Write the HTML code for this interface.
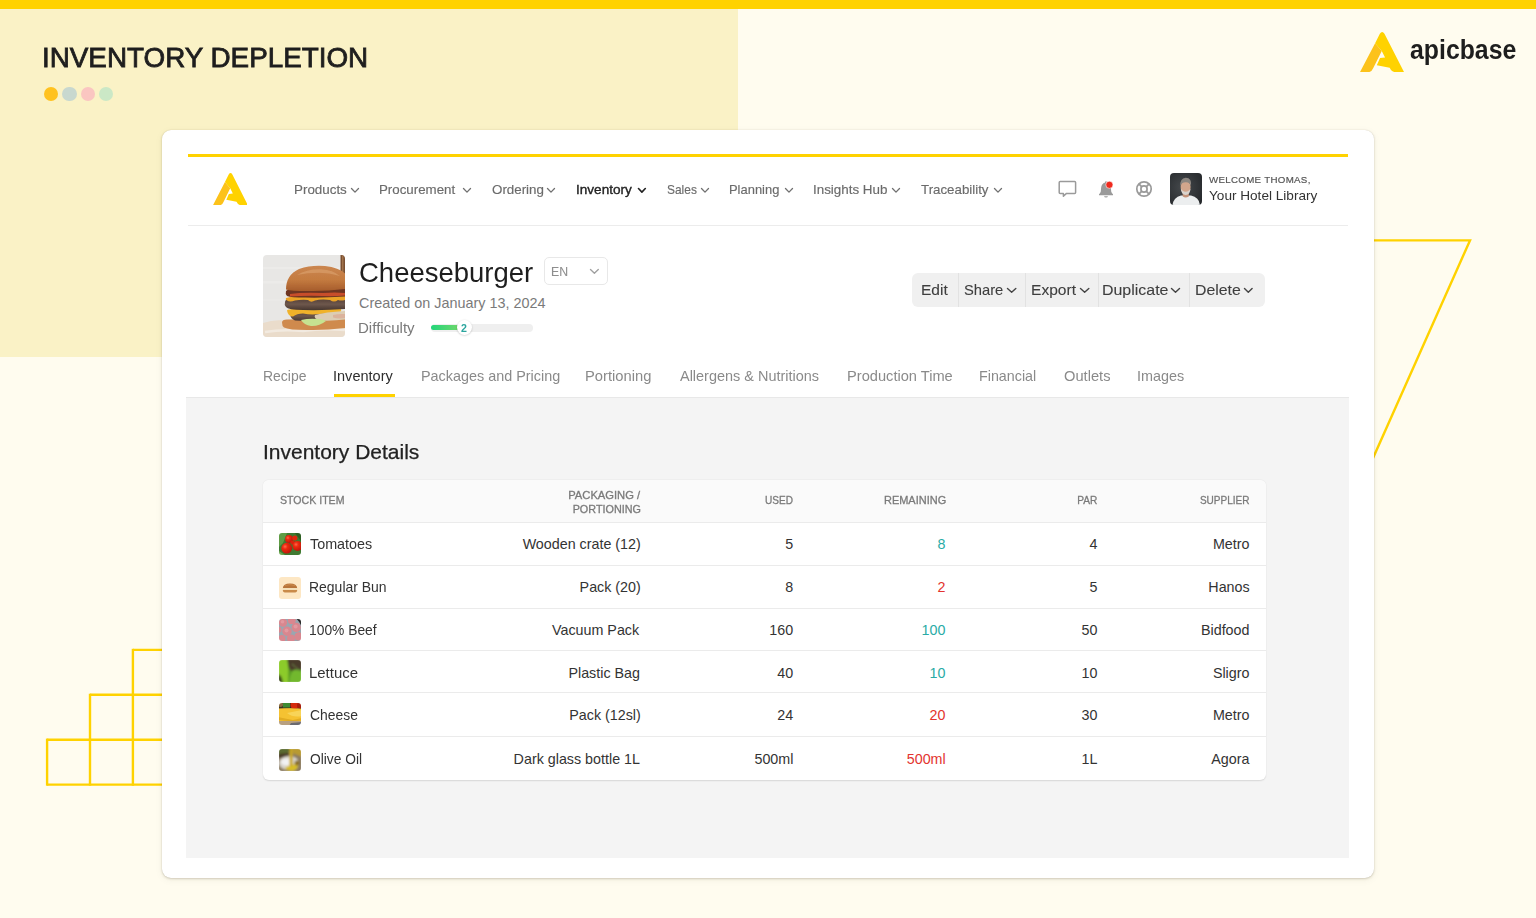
<!DOCTYPE html>
<html><head><meta charset="utf-8"><title>Inventory Depletion</title>
<style>
html,body{margin:0;padding:0}
body{width:1536px;height:918px;position:relative;overflow:hidden;background:#FFFCEF;font-family:"Liberation Sans",sans-serif}
.a{position:absolute}
.t{position:absolute;line-height:1;white-space:nowrap}
</style></head><body>
<div class="a" style="left:0;top:0;width:1536px;height:9px;background:#FFD200"></div>
<div class="a" style="left:0;top:9px;width:738px;height:348px;background:#FAF2C6"></div>
<div class="t" style="top:44px;font-size:27.8px;color:#1E1E1E;-webkit-text-stroke:0.8px #1E1E1E;left:42.10px;transform:scaleX(1.0007);transform-origin:0 50%;">INVENTORY DEPLETION</div>
<div class="a" style="left:44.00px;top:87px;width:14.4px;height:14.4px;border-radius:50%;background:#FFC21F"></div>
<div class="a" style="left:62.35px;top:87px;width:14.4px;height:14.4px;border-radius:50%;background:#C8D8CF"></div>
<div class="a" style="left:80.70px;top:87px;width:14.4px;height:14.4px;border-radius:50%;background:#FAC6C1"></div>
<div class="a" style="left:99.05px;top:87px;width:14.4px;height:14.4px;border-radius:50%;background:#CBE8C6"></div>
<svg class="a" style="left:1359.6px;top:31.8px" width="44.1" height="40.1" viewBox="5.7 5.75 43.8 39.85" preserveAspectRatio="none"><path fill="#FFD200" d="M25.4,7.6 Q27.7,4.1 30.0,7.6 L49.5,45.6 L40.8,45.6 Q37.3,45.6 35.2,41.2 L22.4,38.8 L25.6,31.6 L30.6,31.0 L27.3,24.6 L20.7,17 Z"/><path fill="#FCC21B" d="M20.7,17 L27.3,24.6 L18.9,41.6 Q17.2,45.6 14.2,45.6 L5.7,45.6 Z"/></svg>
<div class="t" style="top:38px;font-size:25px;color:#1E1E1E;font-weight:bold;left:1410.00px;transform:scaleX(0.9934) scaleY(1.12);transform-origin:0 21px;">apicbase</div>
<svg class="a" style="left:0;top:600px" width="200" height="220"><g stroke="#FFD200" stroke-width="2.4" fill="none"><line x1="132.9" y1="49.9" x2="200" y2="49.9"/><line x1="90" y1="94.8" x2="200" y2="94.8"/><line x1="47.1" y1="139.7" x2="200" y2="139.7"/><line x1="47.1" y1="184.6" x2="200" y2="184.6"/><line x1="132.9" y1="48.8" x2="132.9" y2="185.7"/><line x1="90" y1="93.7" x2="90" y2="185.7"/><line x1="47.1" y1="138.6" x2="47.1" y2="185.7"/></g></svg>
<svg class="a" style="left:1300px;top:200px" width="236" height="300"><path d="M40 40.4 L170 40.4 L59.6 288.3" fill="none" stroke="#FFD200" stroke-width="2.4" stroke-linejoin="miter"/></svg>
<div class="a" style="left:162px;top:130px;width:1212px;height:748px;background:#fff;border-radius:9px;box-shadow:0 1px 2.5px rgba(60,50,20,0.2),0 0 1px rgba(60,50,20,0.18),0 2px 8px rgba(60,50,20,0.05)"></div>
<div class="a" style="left:188px;top:154px;width:1160px;height:3px;background:#FFD200"></div>
<svg class="a" style="left:212.5px;top:173px" width="34.9" height="32.2" viewBox="5.7 5.75 43.8 39.85" preserveAspectRatio="none"><path fill="#FFD200" d="M25.4,7.6 Q27.7,4.1 30.0,7.6 L49.5,45.6 L40.8,45.6 Q37.3,45.6 35.2,41.2 L22.4,38.8 L25.6,31.6 L30.6,31.0 L27.3,24.6 L20.7,17 Z"/><path fill="#FCC21B" d="M20.7,17 L27.3,24.6 L18.9,41.6 Q17.2,45.6 14.2,45.6 L5.7,45.6 Z"/></svg>
<div class="t" style="top:183px;font-size:13px;color:#6B6B6B;-webkit-text-stroke:0.15px #6B6B6B;left:293.67px;transform:scaleX(1.0295);transform-origin:0 50%;">Products</div>
<svg class="a" style="left:350px;top:186.5px" width="10" height="6.6" viewBox="-1 -1 10 6.6"><path d="M0.5 0.5 L4.0 4.1 L7.5 0.5" fill="none" stroke="#707070" stroke-width="1.3" stroke-linecap="round" stroke-linejoin="round"/></svg>
<div class="t" style="top:183px;font-size:13px;color:#6B6B6B;-webkit-text-stroke:0.15px #6B6B6B;left:379.48px;transform:scaleX(1.0229);transform-origin:0 50%;">Procurement</div>
<svg class="a" style="left:462px;top:186.5px" width="10" height="6.6" viewBox="-1 -1 10 6.6"><path d="M0.5 0.5 L4.0 4.1 L7.5 0.5" fill="none" stroke="#707070" stroke-width="1.3" stroke-linecap="round" stroke-linejoin="round"/></svg>
<div class="t" style="top:183px;font-size:13px;color:#6B6B6B;-webkit-text-stroke:0.15px #6B6B6B;left:491.50px;transform:scaleX(1.0269);transform-origin:0 50%;">Ordering</div>
<svg class="a" style="left:546.4px;top:186.5px" width="10" height="6.6" viewBox="-1 -1 10 6.6"><path d="M0.5 0.5 L4.0 4.1 L7.5 0.5" fill="none" stroke="#707070" stroke-width="1.3" stroke-linecap="round" stroke-linejoin="round"/></svg>
<div class="t" style="top:183px;font-size:13px;color:#6B6B6B;-webkit-text-stroke:0.15px #6B6B6B;left:666.50px;transform:scaleX(0.9177);transform-origin:0 50%;">Sales</div>
<svg class="a" style="left:700.4px;top:186.5px" width="10" height="6.6" viewBox="-1 -1 10 6.6"><path d="M0.5 0.5 L4.0 4.1 L7.5 0.5" fill="none" stroke="#707070" stroke-width="1.3" stroke-linecap="round" stroke-linejoin="round"/></svg>
<div class="t" style="top:183px;font-size:13px;color:#6B6B6B;-webkit-text-stroke:0.15px #6B6B6B;left:729.31px;transform:scaleX(0.9946);transform-origin:0 50%;">Planning</div>
<svg class="a" style="left:783.7px;top:186.5px" width="10" height="6.6" viewBox="-1 -1 10 6.6"><path d="M0.5 0.5 L4.0 4.1 L7.5 0.5" fill="none" stroke="#707070" stroke-width="1.3" stroke-linecap="round" stroke-linejoin="round"/></svg>
<div class="t" style="top:183px;font-size:13px;color:#6B6B6B;-webkit-text-stroke:0.15px #6B6B6B;left:812.57px;transform:scaleX(1.0291);transform-origin:0 50%;">Insights Hub</div>
<svg class="a" style="left:890.6px;top:186.5px" width="10" height="6.6" viewBox="-1 -1 10 6.6"><path d="M0.5 0.5 L4.0 4.1 L7.5 0.5" fill="none" stroke="#707070" stroke-width="1.3" stroke-linecap="round" stroke-linejoin="round"/></svg>
<div class="t" style="top:183px;font-size:13px;color:#6B6B6B;-webkit-text-stroke:0.15px #6B6B6B;left:921.00px;transform:scaleX(1.0228);transform-origin:0 50%;">Traceability</div>
<svg class="a" style="left:993px;top:186.5px" width="10" height="6.6" viewBox="-1 -1 10 6.6"><path d="M0.5 0.5 L4.0 4.1 L7.5 0.5" fill="none" stroke="#707070" stroke-width="1.3" stroke-linecap="round" stroke-linejoin="round"/></svg>
<div class="t" style="top:183px;font-size:13px;color:#222;-webkit-text-stroke:0.35px #222;left:575.96px;transform:scaleX(1.0439);transform-origin:0 50%;">Inventory</div>
<svg class="a" style="left:636.8px;top:186.5px" width="9.8" height="6.6" viewBox="-1 -1 9.8 6.6"><path d="M0.5 0.5 L3.9 4.1 L7.3 0.5" fill="none" stroke="#222" stroke-width="1.6" stroke-linecap="round" stroke-linejoin="round"/></svg>
<svg class="a" style="left:1056px;top:178px" width="24" height="22" viewBox="0 0 24 22"><path d="M4.2 3.6 H18.6 Q19.6 3.6 19.6 4.6 V14.4 Q19.6 15.4 18.6 15.4 H10.5 L7.4 18.2 V15.4 H4.2 Q3.2 15.4 3.2 14.4 V4.6 Q3.2 3.6 4.2 3.6 Z" fill="none" stroke="#9A9A9A" stroke-width="1.5" stroke-linejoin="round"/></svg>
<svg class="a" style="left:1094px;top:178px" width="24" height="22" viewBox="0 0 24 22"><path d="M11.3 3.5 Q12 3 12.7 3.5 Q13 4 12.9 4.6 Q16.6 5.8 16.9 10 L17.2 13.6 Q17.6 15.3 19 16.3 L19 17.3 H5 L5 16.3 Q6.4 15.3 6.8 13.6 L7.1 10 Q7.4 5.8 11.1 4.6 Q11 4 11.3 3.5 Z" fill="#9A9A9A"/><path d="M10 18.2 H14 Q13.6 19.6 12 19.6 Q10.4 19.6 10 18.2 Z" fill="#9A9A9A"/><circle cx="15.4" cy="6.8" r="3.6" fill="#F02A1E" stroke="#fff" stroke-width="0.6"/></svg>
<svg class="a" style="left:1132px;top:177px" width="24" height="24" viewBox="0 0 24 24"><circle cx="12" cy="12" r="7.2" fill="none" stroke="#9A9A9A" stroke-width="1.7"/><circle cx="12" cy="12" r="3.1" fill="none" stroke="#9A9A9A" stroke-width="1.7"/><g stroke="#9A9A9A" stroke-width="1.8"><line x1="9.8" y1="9.8" x2="6.9" y2="6.9"/><line x1="14.2" y1="9.8" x2="17.1" y2="6.9"/><line x1="9.8" y1="14.2" x2="6.9" y2="17.1"/><line x1="14.2" y1="14.2" x2="17.1" y2="17.1"/></g></svg>
<svg class="a" style="left:1170px;top:173px;border-radius:4px" width="32" height="32" viewBox="0 0 32 32"><defs><radialGradient id="bgav" cx="40%" cy="45%" r="75%"><stop offset="0" stop-color="#45494c"/><stop offset="1" stop-color="#24272a"/></radialGradient></defs><rect width="32" height="32" fill="url(#bgav)"/><path d="M2.5 32 Q3.5 24.5 11 22.5 L21 22.5 Q29 24 30 32 Z" fill="#ECEEEF"/><path d="M12.5 18 L12.8 23.5 Q15.5 25.5 18.8 23.5 L19 18 Z" fill="#C4937A"/><ellipse cx="15.6" cy="14" rx="5" ry="6.6" fill="#D3A68C"/><path d="M10.3 13.5 Q9.6 5.2 15.8 4.8 Q22.2 5 21 13 Q20.2 9.2 15.8 9.2 Q11.2 9.3 10.3 13.5 Z" fill="#8C8680"/><path d="M10.8 15.5 Q11.2 21.6 15.7 22 Q20.3 21.6 20.5 15.5 Q19.2 18.6 15.7 18.7 Q12.3 18.6 10.8 15.5 Z" fill="#D9D3CD"/></svg>
<div class="t" style="top:175px;font-size:9.8px;color:#555;letter-spacing:0.3px;-webkit-text-stroke:0.18px #555;left:1209.20px;transform:scaleX(0.9936);transform-origin:0 50%;">WELCOME THOMAS,</div>
<div class="t" style="top:189px;font-size:13.6px;color:#333;left:1209.20px;transform:scaleX(0.9999);transform-origin:0 50%;">Your Hotel Library</div>
<div class="a" style="left:188px;top:224.5px;width:1160px;height:1.5px;background:#ECECEC"></div>
<svg class="a" style="left:263px;top:255px;border-radius:4px" width="82" height="82" viewBox="0 0 82 82" id="burger"><defs><linearGradient id="bunT" x1="0" y1="0" x2="0" y2="1"><stop offset="0" stop-color="#CB8650"/><stop offset="0.55" stop-color="#C47B40"/><stop offset="1" stop-color="#A65C2C"/></linearGradient><linearGradient id="pat" x1="0" y1="0" x2="0" y2="1"><stop offset="0" stop-color="#54403A"/><stop offset="0.5" stop-color="#6E584C"/><stop offset="1" stop-color="#463630"/></linearGradient><filter id="bl" x="-5%" y="-5%" width="110%" height="110%"><feGaussianBlur stdDeviation="0.4"/></filter></defs><rect width="82" height="82" fill="#E8E7E5"/><rect y="12" width="82" height="2" fill="#ECEBE9"/><rect y="26" width="82" height="2.5" fill="#ECEBE9"/><rect y="44" width="82" height="2" fill="#EAE9E7"/><rect x="77.5" y="0" width="4.5" height="21" fill="#7A4F30"/><rect x="79" y="0" width="1.5" height="20" fill="#A0724A"/><g filter="url(#bl)"><path d="M0 68 Q12 64 24 66 L82 64 L82 83 L0 83 Z" fill="#EADCCB"/><path d="M2 77 Q20 74 40 76 Q60 73 82 75" stroke="#F2EAE0" stroke-width="2.5" fill="none"/><path d="M19 67.5 Q19 64.5 24 64.5 L82 63.5 L82 73 Q62 75.5 44 75 Q26 75 21 72.5 Q19 71 19 67.5 Z" fill="#CF8A4E"/><path d="M27 58 Q28 56 36 56 L74 56 Q76 60 73 64 Q50 66.5 32 65.5 Q27 63.5 27 58 Z" fill="url(#pat)"/><path d="M24 55.5 Q25 53.8 32 54 L78 54 Q79 57 75 58 Q66 58.5 56 59 Q48 60 40 58.5 Q34 58.5 30 61.5 Q25 61.5 24 55.5 Z" fill="#F0B22C"/><path d="M52 60 Q62 57 82 56 L82 64.5 Q70 66 58 65.5 Q50 64 52 60 Z" fill="#DCCDB4"/><path d="M70 60 Q76 58.5 82 59 L82 63 Q76 64 70 62.5 Z" fill="#D99A85" opacity="0.5"/><path d="M38 65 Q46 63 56 64 Q61 64.5 63 66 Q56 71.5 48 71 Q41 70 38 65 Z" fill="#C6E290"/><path d="M22 47 Q22 43.5 30 43.5 L82 43.5 L82 54 Q62 55.5 40 55 Q25 55 23 52 Q21 50 22 47 Z" fill="url(#pat)"/><path d="M23 43 Q30 40.5 44 41 Q56 40.5 66 41 Q76 40.5 82 41 L82 45 Q78 46 75 45 Q71 48 67 45 Q58 44 52 45.5 Q48 48 45 45 Q38 44.5 32 45.5 Q27 47.5 24 45.5 Q22 44.5 23 43 Z" fill="#EBA328"/><path d="M23 36 Q25 33.5 32 34 L82 33.5 L82 41.5 Q60 43 42 42.5 Q28 42.5 24 41 Q22 39 23 36 Z" fill="#6E3420"/><path d="M27 39 Q40 37 60 38 Q72 37 82 38 L82 40.5 Q70 41.5 60 41 Q42 40.5 27 41.5 Z" fill="#C84E2C"/><path d="M23 34.5 Q23 20 36 14 Q48 9.8 62 11 Q76 12.5 82 18.5 L82 34 Q62 36.5 44 36 Q28 36 23 34.5 Z" fill="url(#bunT)"/><path d="M34 20 Q44 13.8 58 14.2 Q70 15 77 21 Q66 17.8 56 17.8 Q44 17.8 34 20 Z" fill="#DCA470" opacity="0.6"/></g></svg>
<div class="t" style="top:259px;font-size:27.3px;color:#1E1E1E;left:358.69px;transform:scaleX(1.0070);transform-origin:0 50%;">Cheeseburger</div>
<div class="a" style="left:544px;top:257px;width:61.5px;height:25.6px;border:1px solid #E8E8E8;border-radius:5px"></div>
<div class="t" style="top:266px;font-size:12.4px;color:#8E8E8E;-webkit-text-stroke:0.1px #8E8E8E;left:550.81px;transform:scaleX(0.9892);transform-origin:0 50%;">EN</div>
<svg class="a" style="left:589.2px;top:267.9px" width="10.8" height="6.8" viewBox="-1 -1 10.8 6.8"><path d="M0.5 0.5 L4.4 4.3 L8.3 0.5" fill="none" stroke="#A0A0A0" stroke-width="1.35" stroke-linecap="round" stroke-linejoin="round"/></svg>
<div class="t" style="top:296px;font-size:14.4px;color:#7A7A7A;left:359.10px;transform:scaleX(1.0000);transform-origin:0 50%;">Created on January 13, 2024</div>
<div class="t" style="top:321px;font-size:14.4px;color:#7A7A7A;left:357.95px;transform:scaleX(1.0461);transform-origin:0 50%;">Difficulty</div>
<div class="a" style="left:431px;top:323.5px;width:102px;height:8px;border-radius:4px;background:#EFEFEF"></div>
<div class="a" style="left:431.4px;top:324.6px;width:32px;height:5.6px;border-radius:3px;background:linear-gradient(90deg,#22D67A,#7BD76A)"></div>
<div class="a" style="left:456.5px;top:320.3px;width:15px;height:15px;border-radius:50%;background:#fff;box-shadow:0 0.5px 2px rgba(0,0,0,0.22)"></div>
<div class="t" style="top:323px;font-size:11.2px;color:#2BA59E;font-weight:bold;left:460.80px;transform:scaleX(0.9500);transform-origin:0 50%;">2</div>
<div class="a" style="left:912px;top:273px;width:353px;height:34px;border-radius:6px;background:#F0F0F0"></div>
<div class="a" style="left:958.1px;top:273px;width:1px;height:34px;background:#E2E2E2"></div>
<div class="a" style="left:1024.5px;top:273px;width:1px;height:34px;background:#E2E2E2"></div>
<div class="a" style="left:1097.9px;top:273px;width:1px;height:34px;background:#E2E2E2"></div>
<div class="a" style="left:1189.1px;top:273px;width:1px;height:34px;background:#E2E2E2"></div>
<div class="t" style="top:282px;font-size:15px;color:#3E3E3E;-webkit-text-stroke:0.1px #3E3E3E;left:920.66px;transform:scaleX(1.0358);transform-origin:0 50%;">Edit</div>
<div class="t" style="top:282px;font-size:15px;color:#3E3E3E;-webkit-text-stroke:0.1px #3E3E3E;left:964.40px;transform:scaleX(0.9802);transform-origin:0 50%;">Share</div>
<div class="t" style="top:282px;font-size:15px;color:#3E3E3E;-webkit-text-stroke:0.1px #3E3E3E;left:1031.16px;transform:scaleX(1.0374);transform-origin:0 50%;">Export</div>
<div class="t" style="top:282px;font-size:15px;color:#3E3E3E;-webkit-text-stroke:0.1px #3E3E3E;left:1101.94px;transform:scaleX(1.0622);transform-origin:0 50%;">Duplicate</div>
<div class="t" style="top:282px;font-size:15px;color:#3E3E3E;-webkit-text-stroke:0.1px #3E3E3E;left:1194.95px;transform:scaleX(1.0543);transform-origin:0 50%;">Delete</div>
<svg class="a" style="left:1006px;top:286.5px" width="11.3" height="6.8" viewBox="-1 -1 11.3 6.8"><path d="M0.5 0.5 L4.65 4.3 L8.8 0.5" fill="none" stroke="#444" stroke-width="1.4" stroke-linecap="round" stroke-linejoin="round"/></svg>
<svg class="a" style="left:1079px;top:286.5px" width="11.3" height="6.8" viewBox="-1 -1 11.3 6.8"><path d="M0.5 0.5 L4.65 4.3 L8.8 0.5" fill="none" stroke="#444" stroke-width="1.4" stroke-linecap="round" stroke-linejoin="round"/></svg>
<svg class="a" style="left:1170px;top:286.5px" width="11" height="6.8" viewBox="-1 -1 11 6.8"><path d="M0.5 0.5 L4.5 4.3 L8.5 0.5" fill="none" stroke="#444" stroke-width="1.4" stroke-linecap="round" stroke-linejoin="round"/></svg>
<svg class="a" style="left:1242.8px;top:286.5px" width="10.6" height="6.8" viewBox="-1 -1 10.6 6.8"><path d="M0.5 0.5 L4.3 4.3 L8.1 0.5" fill="none" stroke="#444" stroke-width="1.4" stroke-linecap="round" stroke-linejoin="round"/></svg>
<div class="t" style="top:369px;font-size:14.4px;color:#8A8A8A;left:262.53px;transform:scaleX(0.9705);transform-origin:0 50%;">Recipe</div>
<div class="t" style="top:369px;font-size:14.4px;color:#8A8A8A;left:421.30px;transform:scaleX(1.0001);transform-origin:0 50%;">Packages and Pricing</div>
<div class="t" style="top:369px;font-size:14.4px;color:#8A8A8A;left:585.28px;transform:scaleX(1.0236);transform-origin:0 50%;">Portioning</div>
<div class="t" style="top:369px;font-size:14.4px;color:#8A8A8A;left:680.40px;transform:scaleX(1.0053);transform-origin:0 50%;">Allergens &amp; Nutritions</div>
<div class="t" style="top:369px;font-size:14.4px;color:#8A8A8A;left:846.58px;transform:scaleX(1.0171);transform-origin:0 50%;">Production Time</div>
<div class="t" style="top:369px;font-size:14.4px;color:#8A8A8A;left:978.61px;transform:scaleX(0.9930);transform-origin:0 50%;">Financial</div>
<div class="t" style="top:369px;font-size:14.4px;color:#8A8A8A;left:1064.00px;transform:scaleX(1.0200);transform-origin:0 50%;">Outlets</div>
<div class="t" style="top:369px;font-size:14.4px;color:#8A8A8A;left:1136.90px;transform:scaleX(1.0001);transform-origin:0 50%;">Images</div>
<div class="t" style="top:369px;font-size:14.4px;color:#2E2E2E;left:333.39px;transform:scaleX(1.0102);transform-origin:0 50%;">Inventory</div>
<div class="a" style="left:334px;top:393.8px;width:61px;height:3px;background:#FFD200"></div>
<div class="a" style="left:185.5px;top:397px;width:1163px;height:461px;background:#F4F4F4;border-top:1.6px solid #E8E8E8;box-sizing:border-box"></div>
<div class="t" style="top:442px;font-size:20.6px;color:#222;-webkit-text-stroke:0.25px #222;left:262.88px;transform:scaleX(1.0192);transform-origin:0 50%;">Inventory Details</div>
<div class="a" style="left:263px;top:480px;width:1003px;height:300px;border-radius:6px;background:#fff;box-shadow:0 0.5px 1.5px rgba(0,0,0,0.12);overflow:hidden"><div style="position:absolute;left:0;top:0;width:100%;height:42px;background:#FAFAFA"></div></div>
<div class="a" style="left:263px;top:521.6px;width:1003px;height:1.3px;background:#EBEBEB"></div>
<div class="a" style="left:263px;top:564.6px;width:1003px;height:1.3px;background:#EBEBEB"></div>
<div class="a" style="left:263px;top:607.6px;width:1003px;height:1.3px;background:#EBEBEB"></div>
<div class="a" style="left:263px;top:649.8px;width:1003px;height:1.3px;background:#EBEBEB"></div>
<div class="a" style="left:263px;top:691.8px;width:1003px;height:1.3px;background:#EBEBEB"></div>
<div class="a" style="left:263px;top:735.8px;width:1003px;height:1.3px;background:#EBEBEB"></div>
<div class="t" style="top:495px;font-size:10.8px;color:#7A7A7A;-webkit-text-stroke:0.3px #7A7A7A;left:279.70px;transform:scaleX(0.9803);transform-origin:0 50%;">STOCK ITEM</div>
<div class="t" style="top:490px;font-size:10.6px;color:#7A7A7A;-webkit-text-stroke:0.3px #7A7A7A;right:895.45px;text-align:right;transform:scaleX(1.0551);transform-origin:100% 50%;">PACKAGING /</div>
<div class="t" style="top:504px;font-size:10.6px;color:#7A7A7A;-webkit-text-stroke:0.3px #7A7A7A;right:894.85px;text-align:right;transform:scaleX(1.0200);transform-origin:100% 50%;">PORTIONING</div>
<div class="t" style="top:495px;font-size:10.8px;color:#7A7A7A;-webkit-text-stroke:0.3px #7A7A7A;right:743.09px;text-align:right;transform:scaleX(0.9305);transform-origin:100% 50%;">USED</div>
<div class="t" style="top:495px;font-size:10.8px;color:#7A7A7A;-webkit-text-stroke:0.3px #7A7A7A;right:590.19px;text-align:right;transform:scaleX(1.0167);transform-origin:100% 50%;">REMAINING</div>
<div class="t" style="top:495px;font-size:10.8px;color:#7A7A7A;-webkit-text-stroke:0.3px #7A7A7A;right:438.68px;text-align:right;transform:scaleX(0.9398);transform-origin:100% 50%;">PAR</div>
<div class="t" style="top:495px;font-size:10.8px;color:#7A7A7A;-webkit-text-stroke:0.3px #7A7A7A;right:286.69px;text-align:right;transform:scaleX(0.9271);transform-origin:100% 50%;">SUPPLIER</div>
<svg class="a" style="left:279px;top:533px;border-radius:3px" width="22" height="22" viewBox="0 0 22 22"><defs><filter id="f0" x="-10%" y="-10%" width="120%" height="120%"><feGaussianBlur stdDeviation="0.7"/></filter><radialGradient id="tg" cx="35%" cy="35%" r="65%"><stop offset="0" stop-color="#FF6A4A"/><stop offset="0.35" stop-color="#EE2A12"/><stop offset="1" stop-color="#C01808"/></radialGradient></defs><g filter="url(#f0)"><rect x="-1" y="-1" width="24" height="24" fill="#3F7A30"/><path d="M0 0 L8 0 L4 10 L0 14 Z" fill="#5E9C45"/><path d="M16 0 L22 0 L22 8 Z" fill="#2E5E22"/><path d="M0 18 L6 22 L0 22 Z" fill="#6AA850"/><circle cx="10" cy="6" r="3.9" fill="url(#tg)"/><circle cx="15.8" cy="5" r="2.6" fill="#E2280F"/><circle cx="13.6" cy="9.6" r="2.2" fill="#D8200C"/><circle cx="7.7" cy="15.2" r="5.4" fill="url(#tg)"/><circle cx="18.5" cy="13" r="5" fill="url(#tg)"/></g></svg>
<div class="t" style="top:537px;font-size:14.3px;color:#333;left:310.00px;transform:scaleX(1.0043);transform-origin:0 50%;">Tomatoes</div>
<div class="t" style="top:537px;font-size:14.3px;color:#333;right:895.23px;text-align:right;transform:scaleX(1.0000);transform-origin:100% 50%;">Wooden crate (12)</div>
<div class="t" style="top:537px;font-size:14.3px;color:#333;right:742.85px;text-align:right;transform:scaleX(1.0000);transform-origin:100% 50%;">5</div>
<div class="t" style="top:537px;font-size:14.3px;color:#2AABA6;right:590.55px;text-align:right;transform:scaleX(1.0000);transform-origin:100% 50%;">8</div>
<div class="t" style="top:537px;font-size:14.3px;color:#333;right:438.55px;text-align:right;transform:scaleX(1.0000);transform-origin:100% 50%;">4</div>
<div class="t" style="top:537px;font-size:14.3px;color:#333;right:286.55px;text-align:right;transform:scaleX(1.0000);transform-origin:100% 50%;">Metro</div>
<svg class="a" style="left:279px;top:577px;border-radius:3px" width="22" height="22" viewBox="0 0 22 22"><defs><filter id="f1" x="-10%" y="-10%" width="120%" height="120%"><feGaussianBlur stdDeviation="0.3"/></filter></defs><rect width="22" height="22" fill="#FDE7C4"/><g filter="url(#f1)"><path d="M3.8 11.2 Q4 6.6 11 6.4 Q18 6.6 18.2 11.2 Z" fill="#B8743A"/><path d="M6 8.5 Q11 6.8 16 8.5" stroke="#D09050" stroke-width="0.8" fill="none"/><rect x="3.8" y="11" width="14.4" height="2.2" fill="#F4DFB8"/><path d="M3.8 13 L18.2 13 Q18.2 15.6 15 15.6 L7 15.6 Q3.8 15.6 3.8 13 Z" fill="#C98A4A"/></g></svg>
<div class="t" style="top:580px;font-size:14.3px;color:#333;left:309.02px;transform:scaleX(0.9767);transform-origin:0 50%;">Regular Bun</div>
<div class="t" style="top:580px;font-size:14.3px;color:#333;right:895.23px;text-align:right;transform:scaleX(1.0000);transform-origin:100% 50%;">Pack (20)</div>
<div class="t" style="top:580px;font-size:14.3px;color:#333;right:742.85px;text-align:right;transform:scaleX(1.0000);transform-origin:100% 50%;">8</div>
<div class="t" style="top:580px;font-size:14.3px;color:#E3342F;right:590.55px;text-align:right;transform:scaleX(1.0000);transform-origin:100% 50%;">2</div>
<div class="t" style="top:580px;font-size:14.3px;color:#333;right:438.55px;text-align:right;transform:scaleX(1.0000);transform-origin:100% 50%;">5</div>
<div class="t" style="top:580px;font-size:14.3px;color:#333;right:286.35px;text-align:right;transform:scaleX(1.0000);transform-origin:100% 50%;">Hanos</div>
<svg class="a" style="left:279px;top:619px;border-radius:3px" width="22" height="22" viewBox="0 0 22 22"><defs><filter id="f2" x="-10%" y="-10%" width="120%" height="120%"><feGaussianBlur stdDeviation="0.7"/></filter></defs><g filter="url(#f2)"><rect x="-1" y="-1" width="24" height="24" fill="#9AA6B0"/><path d="M17 -1 L23 -1 L23 8 Q20 2 17 -1 Z" fill="#2A2A2A"/><g fill="#D9878F"><circle cx="4" cy="3.6" r="4.2"/><circle cx="12.8" cy="1.2" r="3.9"/><circle cx="17.2" cy="8.4" r="4.6"/><circle cx="8" cy="12.3" r="4.7"/><circle cx="19.6" cy="17.4" r="4.2"/><circle cx="2.8" cy="19.8" r="3.7"/><circle cx="12" cy="19.6" r="4"/><circle cx="-0.5" cy="10.8" r="3"/></g><g fill="#E9A6AC" opacity="0.6"><circle cx="3.5" cy="2.8" r="1.8"/><circle cx="16.6" cy="7.6" r="2"/><circle cx="7.5" cy="11.5" r="2"/></g></g></svg>
<div class="t" style="top:623px;font-size:14.3px;color:#333;left:309.03px;transform:scaleX(0.9670);transform-origin:0 50%;">100% Beef</div>
<div class="t" style="top:623px;font-size:14.3px;color:#333;right:896.84px;text-align:right;transform:scaleX(1.0000);transform-origin:100% 50%;">Vacuum Pack</div>
<div class="t" style="top:623px;font-size:14.3px;color:#333;right:742.84px;text-align:right;transform:scaleX(1.0000);transform-origin:100% 50%;">160</div>
<div class="t" style="top:623px;font-size:14.3px;color:#2AABA6;right:590.54px;text-align:right;transform:scaleX(1.0000);transform-origin:100% 50%;">100</div>
<div class="t" style="top:623px;font-size:14.3px;color:#333;right:438.54px;text-align:right;transform:scaleX(1.0000);transform-origin:100% 50%;">50</div>
<div class="t" style="top:623px;font-size:14.3px;color:#333;right:286.54px;text-align:right;transform:scaleX(1.0000);transform-origin:100% 50%;">Bidfood</div>
<svg class="a" style="left:279px;top:660px;border-radius:3px" width="22" height="22" viewBox="0 0 22 22"><defs><filter id="f3" x="-10%" y="-10%" width="120%" height="120%"><feGaussianBlur stdDeviation="0.9"/></filter></defs><g filter="url(#f3)"><rect x="-1" y="-1" width="24" height="24" fill="#5A9A28"/><path d="M8 -1 L23 -1 L23 10 Q16 9 12 11 Q9 8 8 -1 Z" fill="#4A3A2A"/><path d="M-1 -1 L8 -1 Q10 8 9 23 L-1 23 Z" fill="#8CCB2A"/><path d="M-1 14 Q3 15 4 23 L-1 23 Z" fill="#3E4A1E"/><path d="M10 23 Q11 12 16 9.5 Q21 11 23 12 L23 23 Z" fill="#72B82E"/><path d="M13 4 L20 10" stroke="#7AA050" stroke-width="0.8"/></g></svg>
<div class="t" style="top:666px;font-size:14.3px;color:#333;left:308.96px;transform:scaleX(1.0447);transform-origin:0 50%;">Lettuce</div>
<div class="t" style="top:666px;font-size:14.3px;color:#333;right:896.04px;text-align:right;transform:scaleX(1.0000);transform-origin:100% 50%;">Plastic Bag</div>
<div class="t" style="top:666px;font-size:14.3px;color:#333;right:742.84px;text-align:right;transform:scaleX(1.0000);transform-origin:100% 50%;">40</div>
<div class="t" style="top:666px;font-size:14.3px;color:#2AABA6;right:590.54px;text-align:right;transform:scaleX(1.0000);transform-origin:100% 50%;">10</div>
<div class="t" style="top:666px;font-size:14.3px;color:#333;right:438.54px;text-align:right;transform:scaleX(1.0000);transform-origin:100% 50%;">10</div>
<div class="t" style="top:666px;font-size:14.3px;color:#333;right:286.54px;text-align:right;transform:scaleX(1.0000);transform-origin:100% 50%;">Sligro</div>
<svg class="a" style="left:279px;top:703px;border-radius:3px" width="22" height="22" viewBox="0 0 22 22"><defs><filter id="f4" x="-10%" y="-10%" width="120%" height="120%"><feGaussianBlur stdDeviation="0.7"/></filter></defs><g filter="url(#f4)"><rect x="-1" y="-1" width="24" height="24" fill="#F4C030"/><rect x="-1" y="-1" width="24" height="6.5" fill="#3A3020"/><rect x="4" y="-1" width="7" height="5.5" fill="#3E8A30"/><circle cx="15.5" cy="2" r="4" fill="#D42A10"/><circle cx="21" cy="2.5" r="3" fill="#A81A0A"/><circle cx="1.5" cy="1.5" r="2.5" fill="#8A6A40"/><path d="M-1 6 Q10 4.5 23 6 L23 19 L-1 18 Z" fill="#F5C232"/><path d="M8 10 L23 7 L23 13 Q14 15 8 10 Z" fill="#F8D458"/><path d="M-1 14 Q8 16 14 17 L23 15 L23 17.5 Q12 19 -1 17 Z" fill="#E2AC22"/><rect x="-1" y="18" width="24" height="5" fill="#B8A080"/><path d="M12 20 L23 19 L23 23 L10 23 Z" fill="#6A6A70"/></g></svg>
<div class="t" style="top:708px;font-size:14.3px;color:#333;left:310.00px;transform:scaleX(0.9731);transform-origin:0 50%;">Cheese</div>
<div class="t" style="top:708px;font-size:14.3px;color:#333;right:895.23px;text-align:right;transform:scaleX(1.0000);transform-origin:100% 50%;">Pack (12sl)</div>
<div class="t" style="top:708px;font-size:14.3px;color:#333;right:742.84px;text-align:right;transform:scaleX(1.0000);transform-origin:100% 50%;">24</div>
<div class="t" style="top:708px;font-size:14.3px;color:#E3342F;right:590.54px;text-align:right;transform:scaleX(1.0000);transform-origin:100% 50%;">20</div>
<div class="t" style="top:708px;font-size:14.3px;color:#333;right:438.54px;text-align:right;transform:scaleX(1.0000);transform-origin:100% 50%;">30</div>
<div class="t" style="top:708px;font-size:14.3px;color:#333;right:286.55px;text-align:right;transform:scaleX(1.0000);transform-origin:100% 50%;">Metro</div>
<svg class="a" style="left:279px;top:749px;border-radius:3px" width="22" height="22" viewBox="0 0 22 22"><defs><filter id="f5" x="-10%" y="-10%" width="120%" height="120%"><feGaussianBlur stdDeviation="0.8"/></filter></defs><g filter="url(#f5)"><rect x="-1" y="-1" width="24" height="24" fill="#8A7A60"/><path d="M-1 -1 L12 -1 L10 4 L-1 6 Z" fill="#5A6A30"/><path d="M-1 5 L10 4 L10 8 L-1 9 Z" fill="#4A3A28"/><ellipse cx="10" cy="14" rx="10" ry="7" fill="#D8D4CC"/><ellipse cx="8" cy="13" rx="6" ry="3.5" fill="#F2F2F4"/><path d="M6 19 Q12 15 19 15 Q20 20 14 22 Q8 22.5 6 19 Z" fill="#D8BE28"/><rect x="10.5" y="-1" width="3.2" height="18" fill="#C9A820"/><path d="M13 -1 L23 -1 L23 8 Q18 6 13 4 Z" fill="#B89A30"/><circle cx="18" cy="14" r="2.5" fill="#8A7020"/></g></svg>
<div class="t" style="top:752px;font-size:14.3px;color:#333;left:310.00px;transform:scaleX(0.9639);transform-origin:0 50%;">Olive Oil</div>
<div class="t" style="top:752px;font-size:14.3px;color:#333;right:896.04px;text-align:right;transform:scaleX(1.0000);transform-origin:100% 50%;">Dark glass bottle 1L</div>
<div class="t" style="top:752px;font-size:14.3px;color:#333;right:742.61px;text-align:right;transform:scaleX(1.0000);transform-origin:100% 50%;">500ml</div>
<div class="t" style="top:752px;font-size:14.3px;color:#E3342F;right:590.31px;text-align:right;transform:scaleX(1.0000);transform-origin:100% 50%;">500ml</div>
<div class="t" style="top:752px;font-size:14.3px;color:#333;right:438.54px;text-align:right;transform:scaleX(1.0000);transform-origin:100% 50%;">1L</div>
<div class="t" style="top:752px;font-size:14.3px;color:#333;right:286.54px;text-align:right;transform:scaleX(1.0000);transform-origin:100% 50%;">Agora</div>
</body></html>
